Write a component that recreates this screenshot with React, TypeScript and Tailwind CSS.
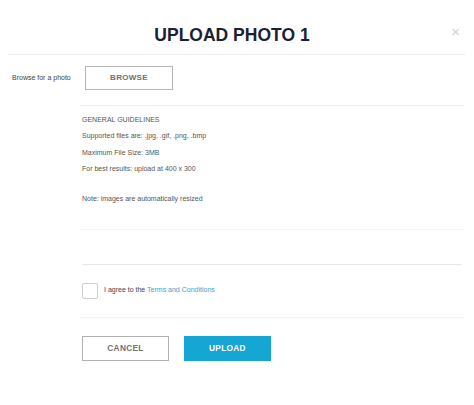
import React from "react";

const guidelines = [
  "Supported files are: .jpg, .gif, .png, .bmp",
  "Maximum File Size: 3MB",
  "For best results: upload at 400 x 300",
];

export default function App() {
  return (
    <div
      className="relative w-[474px] h-[405px] bg-white overflow-hidden"
      style={{ fontFamily: '"Liberation Sans", Arial, sans-serif' }}
    >
      {/* Header */}
      <div className="pt-[24px] pb-[8px] pr-[10px] text-center">
        <h1 className="text-[17.5px] leading-[22px] font-bold text-[#1b2130]">
          UPLOAD PHOTO 1
        </h1>
      </div>
      <button className="absolute right-[14px] top-[24px] text-[15px] leading-none text-[#d0d0d0]">
        ×
      </button>
      <div className="mx-[8px] border-t border-[#f1f1f1]" />

      {/* Browse row */}
      <div className="flex items-center pt-[11px] pl-[12px]">
        <span className="w-[73px] shrink-0 text-[7px] text-[#3f4438]">Browse for a photo</span>
        <button className="w-[88px] h-[24px] border border-[#b5b5b5] text-[8px] font-bold text-[#707070] tracking-[0.3px]">
          BROWSE
        </button>
      </div>
      <div className="mt-[15px] ml-[80px] mr-[10px] border-t border-[#f1f1f1]" />

      {/* Guidelines */}
      <div className="ml-[82px] pt-[5.5px] text-[7px] leading-[16.5px] text-[#555]">
        <p>GENERAL GUIDELINES</p>
        {guidelines.map((g) => (
          <p key={g}>{g}</p>
        ))}
        <p className="mt-[13px]">Note: images are automatically resized</p>
      </div>
      <div className="mt-[21.5px] ml-[80px] mr-[10px] border-t border-[#f6f6f6]" />
      <div className="mt-[34px] ml-[82px] mr-[12px] border-t border-[#e8e8e8]" />

      {/* Terms */}
      <div className="flex items-center gap-[6px] ml-[82px] mt-[18px]">
        <span className="w-[16px] h-[16px] rounded-[2px] border border-[#cfcfcf] bg-white" />
        <span className="text-[7px] text-[#444]">
          I agree to the <a className="text-[#3aa3cc]">Terms and Conditions</a>
        </span>
      </div>
      <div className="mt-[18px] ml-[80px] mr-[10px] border-t border-[#f3f3f3]" />

      {/* Actions */}
      <div className="flex gap-[15px] ml-[82px] mt-[18px]">
        <button className="w-[87px] h-[25px] border border-[#b0b0b0] text-[8.3px] font-bold text-[#707070] tracking-[0.3px]">
          CANCEL
        </button>
        <button className="w-[87px] h-[25px] bg-[#16a6d3] text-[8.3px] font-bold text-white tracking-[0.3px]">
          UPLOAD
        </button>
      </div>
    </div>
  );
}
